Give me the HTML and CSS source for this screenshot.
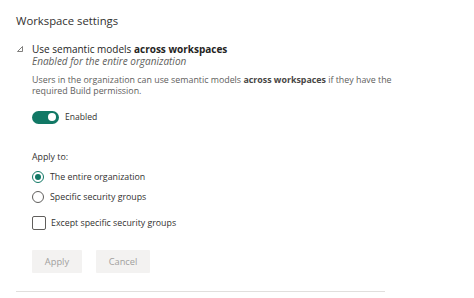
FILE: index.html
```html
<!DOCTYPE html>
<html>
<head>
<meta charset="utf-8">
<link rel="stylesheet" href="styles.css">
</head>
<body>
<div class="page">
  <h1 class="title">Workspace settings</h1>
  <section class="setting">
    <div class="setting-head">
      <svg class="caret" width="6" height="6" viewBox="0 0 6 6"><path d="M5.5 0.5 L5.5 5.5 L0.5 5.5 Z" fill="none" stroke="#605e5c" stroke-width="0.8" stroke-linejoin="round"/></svg>
      <div class="setting-name">Use semantic models <b>across workspaces</b></div>
    </div>
    <div class="setting-body">
      <div class="status">Enabled for the entire organization</div>
      <p class="desc">Users in the organization can use semantic models <b>across workspaces</b> if they have the required Build permission.</p>
      <label class="toggle-row">
        <span class="toggle"><span class="knob"></span></span>
        <span class="toggle-label">Enabled</span>
      </label>
      <div class="apply-label">Apply to:</div>
      <div class="radio-row first"><span class="radio checked"><span class="dot"></span></span><span>The entire organization</span></div>
      <div class="radio-row"><span class="radio"></span><span>Specific security groups</span></div>
      <div class="check-row"><span class="checkbox"></span><span>Except specific security groups</span></div>
      <div class="buttons">
        <button class="btn btn-apply">Apply</button>
        <button class="btn btn-cancel">Cancel</button>
      </div>
    </div>
  </section>
  <div class="rule"></div>
</div>
</body>
</html>
```
FILE: styles.css
```css
* { box-sizing: border-box; }
html, body { margin: 0; padding: 0; background: #fff; }
body {
  font-family: "Open Sans", "Noto Sans", "Liberation Sans", sans-serif;
  color: #252423;
  width: 474px;
  height: 298px;
  overflow: hidden;
}
.page { padding: 12px 0 0 16px; }
.title {
  margin: 0;
  font-size: 11.3px;
  font-weight: 400;
  line-height: 17px;
  color: #323130;
}
.setting { margin-top: 14px; }
.setting-head { display: flex; align-items: center; height: 12px; }
.caret { margin-left: 1px; margin-right: 9px; flex: none; }
.setting-name { font-size: 10px; line-height: 12px; color: #252423; white-space: nowrap; }
.setting-name b { font-weight: 700; }
.setting-body { padding-left: 16px; }
.status { font-size: 10px; font-style: italic; color: #605e5c; line-height: 12px; }
.desc { margin: 8px 0 0; font-size: 8.85px; line-height: 11px; color: #605e5c; width: 368px; }
.desc b { font-weight: 700; color: #484644; }
.toggle-row { display: flex; align-items: center; margin-top: 13px; height: 14px; }
.toggle {
  width: 27px; height: 13px; border-radius: 7px; background: #117865;
  display: flex; align-items: center; justify-content: flex-end; padding-right: 3px;
}
.knob { width: 8px; height: 8px; border-radius: 50%; background: #fff; }
.toggle-label { margin-left: 6px; font-size: 8.6px; color: #323130; }
.apply-label { margin-top: 27px; font-size: 8.8px; line-height: 12px; color: #323130; }
.radio-row { display: flex; align-items: center; gap: 6px; height: 14px; margin-top: 6px; font-size: 8.8px; color: #323130; }
.radio-row.first { margin-top: 7px; }
.radio {
  width: 12px; height: 12px; border-radius: 50%; border: 1px solid #605e5c;
  display: flex; align-items: center; justify-content: center; background: #fff; flex: none;
}
.radio.checked { border-color: #117865; }
.dot { width: 6px; height: 6px; border-radius: 50%; background: #117865; }
.check-row { display: flex; align-items: center; gap: 5px; height: 14px; margin-top: 12px; font-size: 8.8px; color: #323130; }
.checkbox { width: 14px; height: 14px; border: 1px solid #605e5c; border-radius: 2px; flex: none; }
.buttons { display: flex; gap: 14px; margin-top: 20px; }
.btn {
  height: 23px; border: none; background: #f3f2f1; color: #a19f9d;
  font-family: inherit; font-size: 9.3px; padding: 0; border-radius: 1px;
}
.btn-apply { width: 50px; }
.btn-cancel { width: 54px; }
.rule { margin-top: 18px; width: 369px; height: 1px; background: #e1dfdd; }
```
